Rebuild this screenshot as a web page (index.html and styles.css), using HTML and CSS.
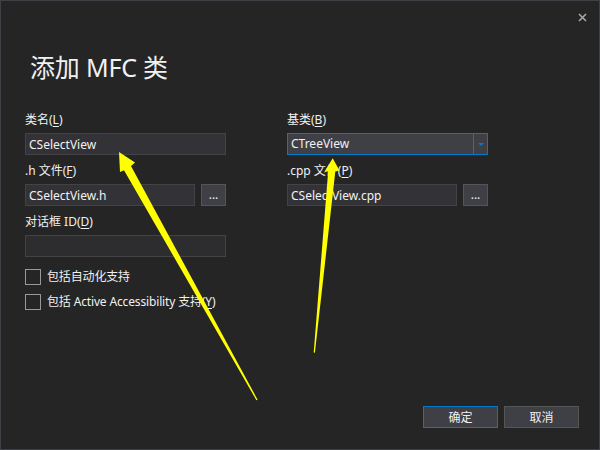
FILE: index.html
```html
<html>
<head>
  <meta charset="utf-8">
  <title>添加 MFC 类</title>
  <link rel="stylesheet" href="styles.css">
</head>
<body>
  <div class="screen">
    <div class="dialog">
      <div class="titlebar">
        <button class="close" title="关闭">
          <svg width="9" height="9" viewBox="0 0 9 9"><path d="M1 1L8 8M8 1L1 8" stroke="#a8a8a8" stroke-width="1.6"/></svg>
        </button>
      </div>

      <h1 class="title">添加 MFC 类</h1>

      <div class="form">
        <div class="col">
          <div class="field">
            <label>类名(<u>L</u>)</label>
            <input class="input" value="CSelectView">
          </div>
          <div class="field">
            <label>.h 文件(<u>F</u>)</label>
            <div class="row">
              <input class="input" value="CSelectView.h">
              <button class="browse">...</button>
            </div>
          </div>
          <div class="field">
            <label>对话框 ID(<u>D</u>)</label>
            <input class="input disabled" value="" disabled>
          </div>
          <div class="checks">
            <label class="check"><span class="box"></span><span>包括自动化支持</span></label>
            <label class="check"><span class="box"></span><span>包括 Active Accessibility 支持(<u>Y</u>)</span></label>
          </div>
        </div>

        <div class="col">
          <div class="field">
            <label>基类(<u>B</u>)</label>
            <div class="combo">
              <span class="combo-value">CTreeView</span>
              <span class="combo-arrow"></span>
            </div>
          </div>
          <div class="field">
            <label>.cpp 文件(<u>P</u>)</label>
            <div class="row">
              <input class="input" value="CSelectView.cpp">
              <button class="browse">...</button>
            </div>
          </div>
        </div>
      </div>

      <div class="footer">
        <button class="btn primary">确定</button>
        <button class="btn">取消</button>
      </div>
    </div>

    <!-- yellow pointer arrows drawn over the dialog -->
    <svg class="marks" width="600" height="450" viewBox="0 0 600 450">
      <polygon fill="#ffff00" points="119,152 135,162.5 131,166 257.6,399.8 256.4,400.2 124,170.2 120,172"/>
      <polygon fill="#ffff00" points="332.7,158.3 339.5,170.5 335.3,171.5 314.9,352.8 313.7,352.6 328.2,171 324,172.5"/>
    </svg>
  </div>
</body>
</html>
```

FILE: styles.css
```css
* {
  box-sizing: border-box;
}
body {
  margin: 0;
  background: #252526;
  font-family: "Noto Sans", "Noto Sans CJK SC", sans-serif;
  font-size: 12px;
  color: #f1f1f1;
}
.screen {
  position: relative;
  width: 600px;
  height: 450px;
}
.dialog {
  width: 600px;
  height: 450px;
  background: #252526;
  border: 1px solid #3f3f46;
  display: flex;
  flex-direction: column;
}
.titlebar {
  display: flex;
  justify-content: flex-end;
  padding: 12px 12px 0 0;
}
.close {
  background: none;
  border: none;
  padding: 0;
  width: 9px;
  height: 9px;
  display: flex;
}
.title {
  margin: 28px 0 0 29px;
  font-size: 25px;
  line-height: 34px;
  font-weight: 400;
  letter-spacing: -0.2px;
  color: #f1f1f1;
}
.form {
  display: grid;
  grid-template-columns: 201px 201px;
  column-gap: 61px;
  margin: 28px 0 0 24px;
}
.col {
  display: flex;
  flex-direction: column;
  gap: 8px;
}
.field {
  display: flex;
  flex-direction: column;
}
.field label {
  line-height: 16px;
  margin-bottom: 5px;
}
u {
  text-decoration-thickness: 1px;
  text-underline-offset: 2px;
}
.input {
  height: 22px;
  width: 100%;
  background: #333337;
  border: 1px solid #434346;
  color: #f1f1f1;
  font: inherit;
  padding: 0 3px;
  outline: none;
}
.input.disabled {
  background: #2d2d30;
}
.row {
  display: flex;
  gap: 6px;
}
.row .input {
  flex: 1;
  min-width: 0;
}
.browse {
  width: 25px;
  height: 22px;
  flex-shrink: 0;
  background: #3f3f46;
  border: 1px solid #555555;
  color: #f1f1f1;
  font: inherit;
  padding: 0;
  line-height: 16px;
}
.combo {
  height: 22px;
  display: flex;
  background: #3f3f46;
  border: 1px solid #007acc;
}
.combo-value {
  flex: 1;
  padding: 0 3px;
  line-height: 20px;
  border-right: 1px solid #007acc;
}
.combo-arrow {
  width: 13px;
  display: flex;
  align-items: center;
  justify-content: center;
}
.combo-arrow::after {
  content: "";
  border-left: 3px solid transparent;
  border-right: 3px solid transparent;
  border-top: 3px solid #007acc;
}
.checks {
  display: flex;
  flex-direction: column;
  gap: 9px;
  margin-top: 4px;
}
.check {
  display: flex;
  align-items: center;
  gap: 6px;
  line-height: 16px;
  white-space: nowrap;
}
.check span:last-child {
  letter-spacing: -0.15px;
}
.box {
  width: 16px;
  height: 16px;
  flex-shrink: 0;
  border: 1px solid #999999;
}
.footer {
  margin-top: auto;
  display: flex;
  justify-content: flex-end;
  gap: 6px;
  padding: 0 20px 21px 0;
}
.btn {
  width: 75px;
  height: 22px;
  background: #3f3f46;
  border: 1px solid #555555;
  color: #f1f1f1;
  font: inherit;
  padding: 0;
}
.btn.primary {
  border-color: #007acc;
}
.marks {
  position: absolute;
  left: 0;
  top: 0;
  pointer-events: none;
}
```
